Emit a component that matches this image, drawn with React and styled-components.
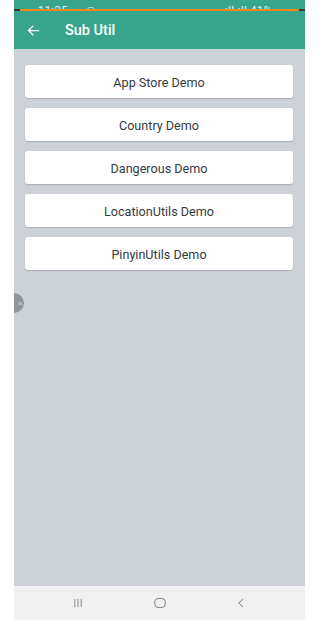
import React from 'react'
import styled, { createGlobalStyle } from 'styled-components'

const GlobalStyle = createGlobalStyle`
  html, body {
    margin: 0;
    padding: 0;
    background: #ffffff;
    font-family: Roboto, "Noto Sans", sans-serif;
  }
`

const demos = ['App Store Demo', 'Country Demo', 'Dangerous Demo', 'LocationUtils Demo', 'PinyinUtils Demo']

function App() {
  return (
    <>
      <GlobalStyle />
      <Phone>
        <StatusBar>
          <StatusText>11:25 ▬ ◎</StatusText>
          <StatusText>▪ ıll ıll 41% ▬</StatusText>
        </StatusBar>
        <Progress />
        <Toolbar>
          <BackArrow viewBox="0 0 24 24">
            <path d="M20 12H5M11 5l-7 7 7 7" fill="none" stroke="#fff" strokeWidth="2" strokeLinecap="square" />
          </BackArrow>
          <Title>Sub Util</Title>
        </Toolbar>
        <Content>
          {demos.map(d => (
            <DemoButton key={d}>{d}</DemoButton>
          ))}
          <FloatBall>ııı</FloatBall>
        </Content>
        <NavBar>
          <NavIcon viewBox="0 0 20 20">
            <path d="M6 5v10M10 5v10M14 5v10" stroke="#8a8a8a" strokeWidth="1.3" />
          </NavIcon>
          <NavIcon viewBox="0 0 20 20">
            <rect x="3.5" y="4.5" width="13" height="11" rx="4.5" fill="none" stroke="#8a8a8a" strokeWidth="1.3" />
          </NavIcon>
          <NavIcon viewBox="0 0 20 20">
            <path d="M12.5 5l-5 5 5 5" fill="none" stroke="#8a8a8a" strokeWidth="1.3" />
          </NavIcon>
        </NavBar>
      </Phone>
    </>
  )
}

export default App

const Phone = styled.div`
  margin-left: 14px;
  width: 291px;
  height: 620px;
  display: flex;
  flex-direction: column;
  background: #cdd2d9;
  overflow: hidden;
`

const StatusBar = styled.div`
  height: 9px;
  background: #36a58b;
  display: flex;
  justify-content: space-between;
  align-items: flex-end;
  padding: 0 18px 0 24px;
  overflow: hidden;
`

const StatusText = styled.span`
  color: #e8f4f0;
  font-size: 11px;
  line-height: 11px;
  margin-bottom: -7px;
  letter-spacing: 0.5px;
`

const Progress = styled.div`
  height: 2px;
  background: linear-gradient(to right, #2e3a40 0 6px, #f5861f 6px calc(100% - 6px), #2e3a40 calc(100% - 6px));
`

const Toolbar = styled.div`
  height: 38px;
  background: #36a58b;
  display: flex;
  align-items: center;
  padding-left: 12px;
`

const BackArrow = styled.svg`
  width: 15px;
  height: 15px;
`

const Title = styled.div`
  margin-left: 24px;
  color: #ffffff;
  font-size: 14.5px;
  font-weight: 500;
`

const Content = styled.div`
  flex: 1;
  position: relative;
  display: flex;
  flex-direction: column;
  gap: 10px;
  padding: 16px 12px 0 11px;
`

const DemoButton = styled.div`
  height: 33px;
  background: #ffffff;
  border-radius: 3px;
  box-shadow: 0 1px 1.5px rgba(0, 0, 0, 0.18);
  display: flex;
  align-items: center;
  justify-content: center;
  color: #363b42;
  font-size: 12.6px;
  font-weight: 400;
  padding-top: 1px;
  box-sizing: border-box;
`

const FloatBall = styled.div`
  position: absolute;
  left: -10px;
  top: 244px;
  width: 20px;
  height: 20px;
  border-radius: 50%;
  background: #8f959c;
  color: #e6e8ea;
  font-size: 5px;
  display: flex;
  align-items: center;
  justify-content: flex-end;
  padding-right: 2px;
  box-sizing: border-box;
`

const NavBar = styled.div`
  height: 34px;
  background: #f1f1f1;
  display: flex;
  align-items: center;
  justify-content: space-between;
  padding: 0 56px;
`

const NavIcon = styled.svg`
  width: 16px;
  height: 16px;
`
